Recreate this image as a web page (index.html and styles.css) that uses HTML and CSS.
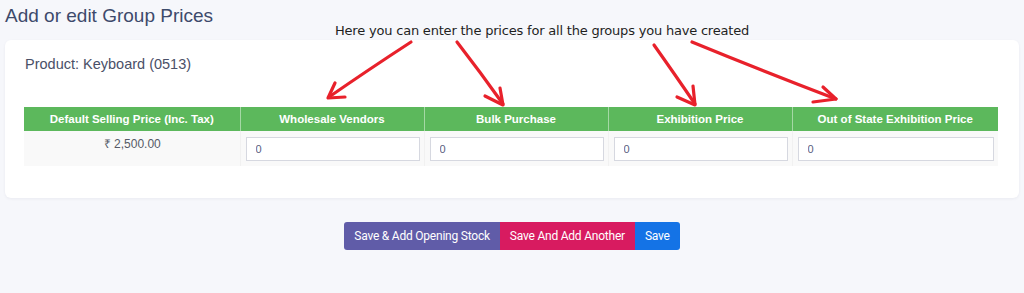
FILE: index.html
```html
<!DOCTYPE html>
<html>
<head>
<meta charset="utf-8">
<link rel="stylesheet" href="styles.css">
</head>
<body>
<div class="page">
  <h1 class="title">Add or edit Group Prices</h1>
  <div class="card">
    <div class="product">Product: Keyboard (0513)</div>
    <table class="prices">
      <colgroup>
        <col class="c1"><col class="c2"><col class="c3"><col class="c4"><col class="c5">
      </colgroup>
      <thead>
        <tr>
          <th>Default Selling Price (Inc. Tax)</th>
          <th>Wholesale Vendors</th>
          <th>Bulk Purchase</th>
          <th>Exhibition Price</th>
          <th>Out of State Exhibition Price</th>
        </tr>
      </thead>
      <tbody>
        <tr>
          <td class="price">₹ 2,500.00</td>
          <td><input class="field" type="text" value="0"></td>
          <td><input class="field" type="text" value="0"></td>
          <td><input class="field" type="text" value="0"></td>
          <td><input class="field" type="text" value="0"></td>
        </tr>
      </tbody>
    </table>
  </div>
  <div class="actions">
    <button class="btn btn-purple">Save &amp; Add Opening Stock</button><button class="btn btn-pink">Save And Add Another</button><button class="btn btn-blue">Save</button>
  </div>
</div>
<div class="note">Here you can enter the prices for all the groups you have created</div>
<svg class="arrows" width="1024" height="293" viewBox="0 0 1024 293">
  <g fill="none" stroke="#e8212b" stroke-width="3.2" stroke-linecap="round" stroke-linejoin="round">
    <path d="M411,42 Q368,70 329,97"/>
    <path d="M335,83 L328,98 L345,97"/>
    <path d="M457,42 Q481,73 503,104"/>
    <path d="M500,88 L503,105 L485,96"/>
    <path d="M654,45 Q676,76 695,104"/>
    <path d="M693,86 L695,105 L677,97"/>
    <path d="M692,42 Q765,72 836,99"/>
    <path d="M823,87 L836,99 L813,102"/>
  </g>
</svg>
</body>
</html>
```

FILE: styles.css
```css
html, body {
  margin: 0;
  padding: 0;
}
body {
  background: #f6f7fb;
  font-family: "Liberation Sans", Arial, sans-serif;
  width: 1024px;
  height: 293px;
  overflow: hidden;
  position: relative;
}
.page {
  display: flex;
  flex-direction: column;
}
.title {
  margin: 0;
  height: 40px;
  box-sizing: border-box;
  padding: 5px 5px 0;
  font-size: 19px;
  line-height: 22px;
  font-weight: normal;
  color: #3d4a6b;
}
.card {
  margin: 0 5px;
  background: #ffffff;
  border-radius: 6px;
  box-shadow: 0 1px 3px rgba(30, 40, 90, 0.06);
  padding: 14px 21px 33px 19px;
  height: 158px;
  box-sizing: border-box;
}
.product {
  font-size: 14.5px;
  line-height: 20px;
  color: #4a5068;
  margin-bottom: 33px;
  padding-left: 1px;
}
.prices {
  border-collapse: collapse;
  table-layout: fixed;
  width: 974px;
}
.c1 { width: 216px; }
.c2 { width: 184px; }
.c3 { width: 184px; }
.c4 { width: 184px; }
.c5 { width: 206px; }
.prices th {
  background: #5cb85c;
  color: #ffffff;
  font-size: 11.5px;
  font-weight: bold;
  height: 24px;
  padding: 0 4px;
  border-left: 1px solid rgba(255, 255, 255, 0.45);
  text-align: center;
  white-space: nowrap;
}
.prices th:first-child {
  border-left: none;
}
.prices td {
  background: #f9f9f9;
  border-left: 1px solid #f1f1f1;
  padding: 6px 4px 5px 5px;
  vertical-align: top;
  height: 23px;
}
.prices td:first-child {
  border-left: none;
}
.price {
  text-align: center;
  font-size: 12px;
  color: #555a66;
  line-height: 14px;
}
.field {
  display: block;
  width: 100%;
  height: 24px;
  box-sizing: border-box;
  border: 1px solid #d6d8e0;
  background: #ffffff;
  padding: 0 9px;
  font-family: "Liberation Sans", Arial, sans-serif;
  font-size: 11px;
  color: #5a6080;
  outline: none;
}
.actions {
  display: flex;
  justify-content: center;
  margin-top: 24px;
}
.btn {
  border: none;
  height: 28px;
  padding: 0 10px;
  font-family: Roboto, "Liberation Sans", sans-serif;
  font-size: 12px;
  letter-spacing: -0.22px;
  color: #ffffff;
  margin: 0;
}
.btn-purple {
  background: #605ca8;
  border-radius: 3px 0 0 3px;
}
.btn-pink {
  background: #d81b60;
}
.btn-blue {
  background: #1473e6;
  border-radius: 0 3px 3px 0;
}
.note {
  position: absolute;
  left: 335px;
  top: 23px;
  white-space: nowrap;
  font-family: "DejaVu Sans", Tahoma, sans-serif;
  font-size: 13px;
  letter-spacing: -0.2px;
  color: #1f1f1f;
}
.arrows {
  position: absolute;
  left: 0;
  top: 0;
  pointer-events: none;
}
```
